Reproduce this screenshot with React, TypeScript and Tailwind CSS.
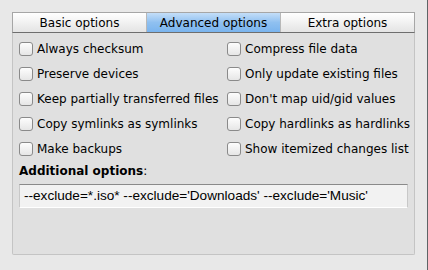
const left = [
  'Always checksum',
  'Preserve devices',
  'Keep partially transferred files',
  'Copy symlinks as symlinks',
  'Make backups',
]

const right = [
  'Compress file data',
  'Only update existing files',
  "Don't map uid/gid values",
  'Copy hardlinks as hardlinks',
  'Show itemized changes list',
]

function Check({ label }: { label: string }) {
  return (
    <label className="flex items-center h-[25px] gap-[4px] whitespace-nowrap">
      <span className="w-[14px] h-[14px] shrink-0 rounded-[3px] border border-[#8a8a8a] bg-gradient-to-b from-[#fdfdfd] to-[#e6e6e6]" />
      <span>{label}</span>
    </label>
  )
}

function Tab({ label, active, last }: { label: string; active?: boolean; last?: boolean }) {
  return (
    <div
      className={
        'flex-1 flex items-center justify-center h-full ' +
        (last ? '' : 'border-r border-[#b8b8b8] ') +
        (active
          ? 'bg-gradient-to-b from-[#c4def8] via-[#8fc0f0] to-[#7ab4ee]'
          : 'bg-gradient-to-b from-[#ffffff] to-[#e4e4e4]')
      }
    >
      {label}
    </div>
  )
}

export default function App() {
  return (
    <div
      className="w-[428px] h-[270px] bg-[#e8e8e8] border-r border-[#5e6466] pt-[12px] pl-[12px] text-[12px] text-black"
      style={{ fontFamily: '"DejaVu Sans", sans-serif' }}
    >
      <div className="w-[403px] h-[243px] flex flex-col">
        <div className="flex h-[21px] border border-[#a6a6a6] border-b-[#6e6e6e] bg-white">
          <Tab label="Basic options" />
          <Tab label="Advanced options" active />
          <Tab label="Extra options" last />
        </div>
        <div className="flex-1 bg-[#e0e0e0] border-x border-b border-[#c4c4c4] rounded-b-[2px] pl-[6px] pr-[4px] pt-[3px]">
          <div className="grid grid-cols-[208px_1fr]">
            <div className="flex flex-col">
              {left.map(l => <Check key={l} label={l} />)}
            </div>
            <div className="flex flex-col">
              {right.map(l => <Check key={l} label={l} />)}
            </div>
          </div>
          <div className="h-[20px] flex items-center">
            <span className="font-bold">Additional options</span>:
          </div>
          <div
            className="mt-[3px] mr-[2px] h-[24px] flex items-center px-[4px] bg-[#f2f2f2] border border-[#c8c8c8] border-t-[#8a8a8a] border-b-white text-[13.6px]"
            style={{ fontFamily: '"Liberation Sans", Arial, sans-serif' }}
          >
            --exclude=*.iso* --exclude='Downloads' --exclude='Music'
          </div>
        </div>
      </div>
    </div>
  )
}
